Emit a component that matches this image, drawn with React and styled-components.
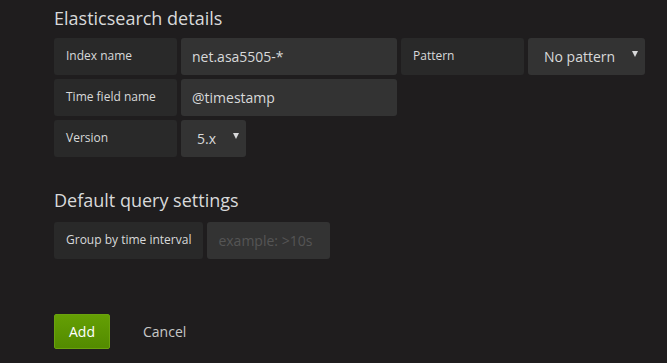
import React from "react";
import styled, { createGlobalStyle } from "styled-components";

const Global = createGlobalStyle`
  html, body { margin: 0; padding: 0; background: #1f1d1e; }
  body { font-family: "Open Sans", "Liberation Sans", sans-serif; color: #d8d9da; }
  * { box-sizing: border-box; }
`;

const Page = styled.div`
  width: 667px;
  height: 363px;
  padding: 6px 0 0 54px;
  background: #1f1d1e;
  display: flex;
  flex-direction: column;
`;

const Heading = styled.h3`
  margin: 0 0 ${p => p.$mb}px 0;
  font-size: 18px;
  font-weight: 400;
  line-height: 24px;
  color: #d8d9da;
`;

const Section = styled.div`
  display: flex;
  flex-direction: column;
  gap: 4px;
  margin-bottom: ${p => p.$mb}px;
`;

const Row = styled.div`
  display: flex;
  gap: 4px;
  height: 37px;
`;

const Label = styled.div`
  width: ${p => (p.$w ? `${p.$w}px` : "auto")};
  flex: none;
  background: #292929;
  border-radius: 3px;
  padding: 0 12px 2px 12px;
  display: flex;
  align-items: center;
  font-size: 12px;
  color: #d8d9da;
`;

const Input = styled.div`
  width: ${p => p.$w}px;
  flex: none;
  background: #333333;
  border-radius: 3px;
  padding: 0 11px;
  display: flex;
  align-items: center;
  font-size: 14px;
  color: ${p => (p.$placeholder ? "#555555" : "#d8d9da")};
`;

const Select = styled(Input)`
  justify-content: space-between;
  padding: 0 7px 0 16px;
  color: #d8d9da;
`;

const Caret = styled.span`
  width: 0;
  height: 0;
  border-left: 3.5px solid transparent;
  border-right: 3.5px solid transparent;
  border-top: 6px solid #d8d9da;
  margin-top: -6px;
`;

const Actions = styled.div`
  display: flex;
  align-items: center;
  gap: 33px;
`;

const AddButton = styled.button`
  width: 56px;
  height: 35px;
  border: 1px solid #6aa20e;
  border-radius: 2px;
  background: linear-gradient(#649f04, #538b00);
  color: #ffffff;
  font-family: inherit;
  font-size: 14px;
  padding: 0;
`;

const CancelLink = styled.a`
  font-size: 14px;
  color: #c8c8c8;
  text-decoration: none;
`;

export default function App() {
  return (
    <>
      <Global />
      <Page>
        <Heading $mb={8}>Elasticsearch details</Heading>
        <Section $mb={31}>
          <Row>
            <Label $w={123}>Index name</Label>
            <Input $w={216}>net.asa5505-*</Input>
            <Label $w={123}>Pattern</Label>
            <Select $w={117}>
              No pattern <Caret />
            </Select>
          </Row>
          <Row>
            <Label $w={123}>Time field name</Label>
            <Input $w={216}>@timestamp</Input>
          </Row>
          <Row>
            <Label $w={123}>Version</Label>
            <Select $w={65}>
              5.x <Caret />
            </Select>
          </Row>
        </Section>
        <Heading $mb={10}>Default query settings</Heading>
        <Section $mb={55}>
          <Row>
            <Label>Group by time interval</Label>
            <Input $w={123} $placeholder>example: &gt;10s</Input>
          </Row>
        </Section>
        <Actions>
          <AddButton>Add</AddButton>
          <CancelLink href="#">Cancel</CancelLink>
        </Actions>
      </Page>
    </>
  );
}
